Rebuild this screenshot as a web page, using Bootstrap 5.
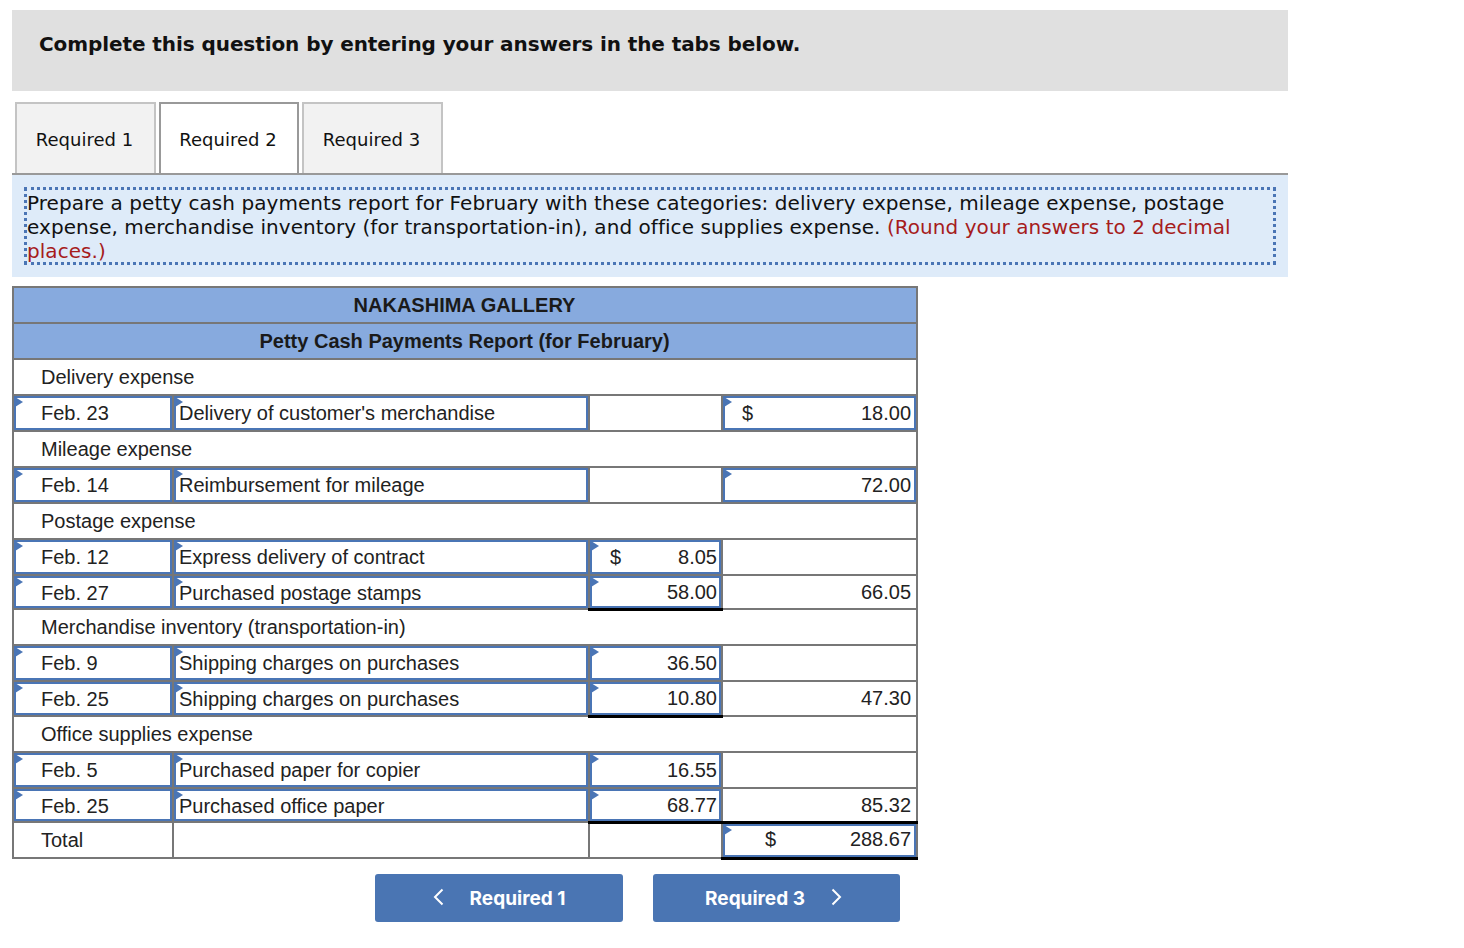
<!DOCTYPE html>
<html lang="en">
<head>
<meta charset="utf-8">
<title>Petty Cash Payments Report</title>
<link href="https://cdn.jsdelivr.net/npm/bootstrap@5.3.0/dist/css/bootstrap.min.css" rel="stylesheet">
<style>
body{background:#fff;color:#000;font-family:"DejaVu Sans",sans-serif;}
.qz-page{width:1276px;margin-left:12px;padding-top:10px;}
.qz-head{height:81px;background:#e0e0e0;padding:22px 27px;font-size:20px;font-weight:700;line-height:24px;color:#111;letter-spacing:-.08px;}
.qz-tabs{height:84px;padding:11px 0 0 3px;gap:3px;border-bottom:2px solid #999;}
.qz-tabs .nav-link{width:141px;height:71px;margin:0;padding:2px 2px 0 0;display:flex;align-items:center;justify-content:center;background:#f2f2f2;border:2px solid #c4c4c4;border-bottom:0;border-radius:0;color:#111;font-size:18px;}
.qz-tabs .nav-link.active{width:140px;background:#fff;border-color:#999;}
.qz-brief{height:102px;background:#deebf9;padding:12px;font-size:20px;line-height:24px;letter-spacing:.05px;}
.qz-brief-in{height:78px;border:3px dotted #4a75b5;padding:1px 0 0 0;color:#111;}
.qz-red{color:#a61c1c;}
.qz-report{margin-top:9px;width:904px;table-layout:fixed;border-collapse:collapse;font-family:"Liberation Sans",Arial,sans-serif;font-size:20px;color:#222;}
.qz-report td{border:2px solid #777;padding:0 5px 0 4px;height:36px;position:relative;white-space:nowrap;line-height:24px;}
.qz-report tr.qz-short td{height:34px;}
.qz-report tr.qz-mid td{height:35px;}
.qz-report tr.qz-short td:nth-child(-n+2){padding-top:2px;}
.qz-report tr.qz-mid td:last-child{padding-bottom:2px;}
.qz-report td.qz-title{background:#87aade;text-align:center;font-weight:700;color:#1a1a1a;}
.qz-report td.qz-lab{padding-left:27px;}
.qz-report td.qz-in{box-shadow:inset 0 0 0 2px #4a75b5;}
.qz-report td.qz-in::before{content:"";position:absolute;left:1px;top:1px;border-left:8px solid #4a75b5;border-top:5px solid transparent;border-bottom:5px solid transparent;}
.qz-report td.qz-desc{padding-left:5px;}
.qz-report td.qz-rule{border-bottom:3px solid #000;}
.qz-report td.qz-rule2{border-bottom:3px solid #000;padding-bottom:2px;}
.qz-report td.qz-c3{padding-right:4px;}
.qz-amt{display:flex;justify-content:space-between;}
.qz-d1{padding-left:16px;}
.qz-d2{padding-left:15px;}
.qz-d3{padding-left:38px;}
.qz-nav{padding:14px 0 0 363px;gap:30px;}
.qz-btn{width:248px;height:48px;background:#4a75b3;border:0;border-radius:3px;color:#fff;font-family:Inter,sans-serif;font-weight:700;font-size:19px;gap:26px;padding:0;}
.qz-btn:hover{background:#4a75b3;color:#fff;}
.qz-btn.qz-next{width:247px;padding-right:6px;}
.qz-btn span{padding-top:4px;}
.qz-btn svg{display:block;margin-bottom:2px;}
</style>
</head>
<body>
<div class="qz-page">
  <div class="qz-head">Complete this question by entering your answers in the tabs below.</div>
  <ul class="nav qz-tabs">
    <li class="nav-item"><a class="nav-link" href="#">Required 1</a></li>
    <li class="nav-item"><a class="nav-link active" href="#">Required 2</a></li>
    <li class="nav-item"><a class="nav-link" href="#">Required 3</a></li>
  </ul>
  <div class="qz-brief"><div class="qz-brief-in">Prepare a petty cash payments report for February with these categories: delivery expense, mileage expense, postage expense, merchandise inventory (for transportation-in), and office supplies expense. <span class="qz-red">(Round your answers to 2 decimal places.)</span></div></div>
  <table class="qz-report">
    <colgroup><col style="width:160px"><col style="width:416px"><col style="width:133px"><col style="width:195px"></colgroup>
    <tbody>
      <tr><td class="qz-title" colspan="4">NAKASHIMA GALLERY</td></tr>
      <tr><td class="qz-title" colspan="4">Petty Cash Payments Report (for February)</td></tr>
      <tr><td class="qz-lab" colspan="4">Delivery expense</td></tr>
      <tr><td class="qz-lab qz-in">Feb. 23</td><td class="qz-in qz-desc">Delivery of customer's merchandise</td><td></td><td class="qz-in"><div class="qz-amt qz-d2"><span>$</span><span>18.00</span></div></td></tr>
      <tr><td class="qz-lab" colspan="4">Mileage expense</td></tr>
      <tr><td class="qz-lab qz-in">Feb. 14</td><td class="qz-in qz-desc">Reimbursement for mileage</td><td></td><td class="qz-in text-end">72.00</td></tr>
      <tr><td class="qz-lab" colspan="4">Postage expense</td></tr>
      <tr><td class="qz-lab qz-in">Feb. 12</td><td class="qz-in qz-desc">Express delivery of contract</td><td class="qz-in qz-c3"><div class="qz-amt qz-d1"><span>$</span><span>8.05</span></div></td><td></td></tr>
      <tr class="qz-short"><td class="qz-lab qz-in">Feb. 27</td><td class="qz-in qz-desc">Purchased postage stamps</td><td class="qz-in qz-c3 qz-rule text-end">58.00</td><td class="text-end">66.05</td></tr>
      <tr><td class="qz-lab" colspan="4">Merchandise inventory (transportation-in)</td></tr>
      <tr><td class="qz-lab qz-in">Feb. 9</td><td class="qz-in qz-desc">Shipping charges on purchases</td><td class="qz-in qz-c3 text-end">36.50</td><td></td></tr>
      <tr class="qz-mid"><td class="qz-lab qz-in">Feb. 25</td><td class="qz-in qz-desc">Shipping charges on purchases</td><td class="qz-in qz-c3 qz-rule text-end">10.80</td><td class="text-end">47.30</td></tr>
      <tr><td class="qz-lab" colspan="4">Office supplies expense</td></tr>
      <tr><td class="qz-lab qz-in">Feb. 5</td><td class="qz-in qz-desc">Purchased paper for copier</td><td class="qz-in qz-c3 text-end">16.55</td><td></td></tr>
      <tr class="qz-short"><td class="qz-lab qz-in">Feb. 25</td><td class="qz-in qz-desc">Purchased office paper</td><td class="qz-in qz-c3 qz-rule text-end">68.77</td><td class="qz-rule text-end">85.32</td></tr>
      <tr><td class="qz-lab">Total</td><td></td><td></td><td class="qz-in qz-rule2"><div class="qz-amt qz-d3"><span>$</span><span>288.67</span></div></td></tr>
    </tbody>
  </table>
  <div class="d-flex qz-nav">
    <button type="button" class="btn qz-btn d-flex align-items-center justify-content-center"><svg width="11" height="18" viewBox="0 0 11 18" fill="none" stroke="#fff" stroke-width="2"><path d="M9.5 1.5 2 9l7.5 7.5"/></svg><span>Required 1</span></button>
    <button type="button" class="btn qz-btn qz-next d-flex align-items-center justify-content-center"><span>Required 3</span><svg width="11" height="18" viewBox="0 0 11 18" fill="none" stroke="#fff" stroke-width="2"><path d="M1.5 1.5 9 9l-7.5 7.5"/></svg></button>
  </div>
</div>
<script src="https://cdn.jsdelivr.net/npm/bootstrap@5.3.0/dist/js/bootstrap.bundle.min.js"></script>
</body>
</html>
